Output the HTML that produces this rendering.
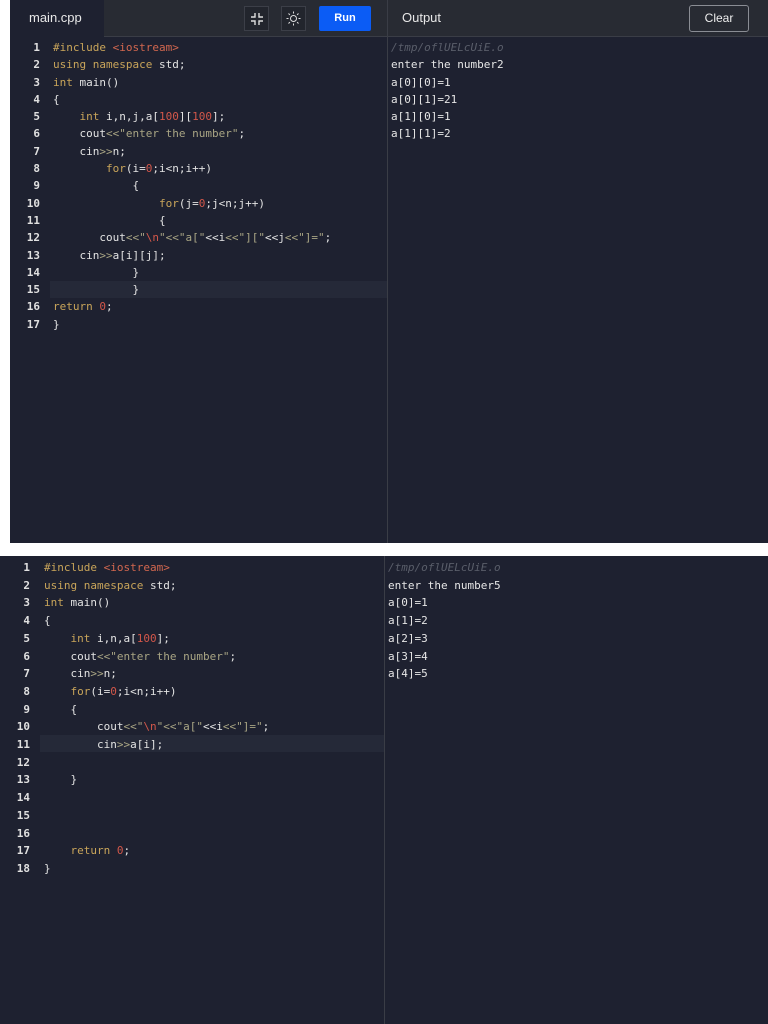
<!DOCTYPE html>
<html><head><meta charset="utf-8"><style>
*{margin:0;padding:0;box-sizing:border-box}
body{width:768px;height:1024px;background:#fff;position:relative;overflow:hidden;font-family:"DejaVu Sans Mono","Liberation Mono",monospace}
.p{position:absolute;background:#1e2130}
.hdr{position:absolute;top:0;height:37px;background:#282b33;border-bottom:1px solid #3a3d46}
.ln{position:absolute;width:30px;text-align:right;color:#e0e0e0;font-size:11px;font-weight:bold}
.c{position:absolute;white-space:pre;font-size:11px;color:#e3e3e3}
.k{color:#c9a55a}.s{color:#a9a584}.n{color:#d2574a}.t{color:#d2674f}.o{color:#c9a55a}
.out{position:absolute;white-space:pre;font-size:11px;color:#e6e6e6}
.dim{color:#5a5e6a;font-style:italic}
.ui{font-family:"Liberation Sans",sans-serif}
</style></head><body>
<div class="p" style="left:10px;top:0;width:758px;height:543px"></div>
<div class="hdr" style="left:104px;width:664px"></div>
<div style="position:absolute;left:10px;top:0;width:94px;height:37px;background:#1e2130"></div>
<div class="ui" style="position:absolute;left:29px;top:10px;color:#e8e8e8;font-size:13px">main.cpp</div>
<div style="position:absolute;left:244px;top:6px;width:25px;height:25px;border:1px solid #3c3f48;background:#22252d"></div>
<svg style="position:absolute;left:249px;top:11px" width="16" height="16" stroke="#ddd" stroke-width="1.4" fill="none"><path d="M6 2v4H2M10 2v4h4M6 14v-4H2M10 14v-4h4"/></svg>
<div style="position:absolute;left:281px;top:6px;width:25px;height:25px;border:1px solid #3c3f48;background:#22252d"></div>
<svg style="position:absolute;left:285px;top:10px" width="17" height="17" stroke="#ddd" stroke-width="1" fill="none"><circle cx="8.5" cy="8.5" r="3"/><path d="M8.5 1.5v2M8.5 13.5v2M1.5 8.5h2M13.5 8.5h2M3.5 3.5l1.4 1.4M12.1 12.1l1.4 1.4M3.5 13.5l1.4-1.4M12.1 4.9l1.4-1.4"/></svg>
<div class="ui" style="position:absolute;left:319px;top:6px;width:52px;height:25px;background:#0b5cf5;border-radius:2px;color:#fff;font-size:11px;font-weight:bold;text-align:center;line-height:25px">Run</div>
<div style="position:absolute;left:387px;top:0;width:1px;height:543px;background:#3a3d46"></div>
<div class="ui" style="position:absolute;left:402px;top:10px;color:#e8e8e8;font-size:13px">Output</div>
<div class="ui" style="position:absolute;left:689px;top:5px;width:60px;height:27px;border:1px solid #8a8d94;border-radius:3px;color:#eee;font-size:12px;text-align:center;line-height:25px">Clear</div>
<div style="position:absolute;left:50px;top:281px;width:337px;height:17px;background:#252938"></div>

<div class="ln" style="left:10px;top:39px;line-height:17.3px">1<br>2<br>3<br>4<br>5<br>6<br>7<br>8<br>9<br>10<br>11<br>12<br>13<br>14<br>15<br>16<br>17</div>
<div class="c" style="left:53px;top:39px;line-height:17.3px"><span class="o">#include</span> <span class="t">&lt;iostream&gt;</span>
<span class="k">using namespace</span> std;
<span class="k">int</span> main()
{
    <span class="k">int</span> i,n,j,a[<span class="n">100</span>][<span class="n">100</span>];
    cout<span class="s">&lt;&lt;"enter the number"</span>;
    cin<span class="s">&gt;&gt;</span>n;
        <span class="k">for</span>(i=<span class="n">0</span>;i&lt;n;i++)
            {
                <span class="k">for</span>(j=<span class="n">0</span>;j&lt;n;j++)
                {
       cout<span class="s">&lt;&lt;"</span><span class="n">\n</span><span class="s">"&lt;&lt;"a["</span>&lt;&lt;i<span class="s">&lt;&lt;"]["</span>&lt;&lt;j<span class="s">&lt;&lt;"]="</span>;
    cin<span class="s">&gt;&gt;</span>a[i][j];
            }
            }
<span class="k">return</span> <span class="n">0</span>;
}</div>
<div class="out" style="left:391px;top:39px;line-height:17.3px"><span class="dim">/tmp/oflUELcUiE.o</span>
enter the number2
a[0][0]=1
a[0][1]=21
a[1][0]=1
a[1][1]=2</div>

<div class="p" style="left:0;top:556px;width:768px;height:468px"></div>
<div style="position:absolute;left:384px;top:556px;width:1px;height:468px;background:#3a3d46"></div>
<div style="position:absolute;left:40px;top:735px;width:344px;height:17px;background:#252938"></div>
<div class="ln" style="left:0;top:559px;line-height:17.7px">1<br>2<br>3<br>4<br>5<br>6<br>7<br>8<br>9<br>10<br>11<br>12<br>13<br>14<br>15<br>16<br>17<br>18</div>
<div class="c" style="left:44px;top:559px;line-height:17.7px"><span class="o">#include</span> <span class="t">&lt;iostream&gt;</span>
<span class="k">using namespace</span> std;
<span class="k">int</span> main()
{
    <span class="k">int</span> i,n,a[<span class="n">100</span>];
    cout<span class="s">&lt;&lt;"enter the number"</span>;
    cin<span class="s">&gt;&gt;</span>n;
    <span class="k">for</span>(i=<span class="n">0</span>;i&lt;n;i++)
    {
        cout<span class="s">&lt;&lt;"</span><span class="n">\n</span><span class="s">"&lt;&lt;"a["</span>&lt;&lt;i<span class="s">&lt;&lt;"]="</span>;
        cin<span class="s">&gt;&gt;</span>a[i];

    }



    <span class="k">return</span> <span class="n">0</span>;
}</div>
<div class="out" style="left:388px;top:559px;line-height:17.7px"><span class="dim">/tmp/oflUELcUiE.o</span>
enter the number5
a[0]=1
a[1]=2
a[2]=3
a[3]=4
a[4]=5</div>
</body></html>
